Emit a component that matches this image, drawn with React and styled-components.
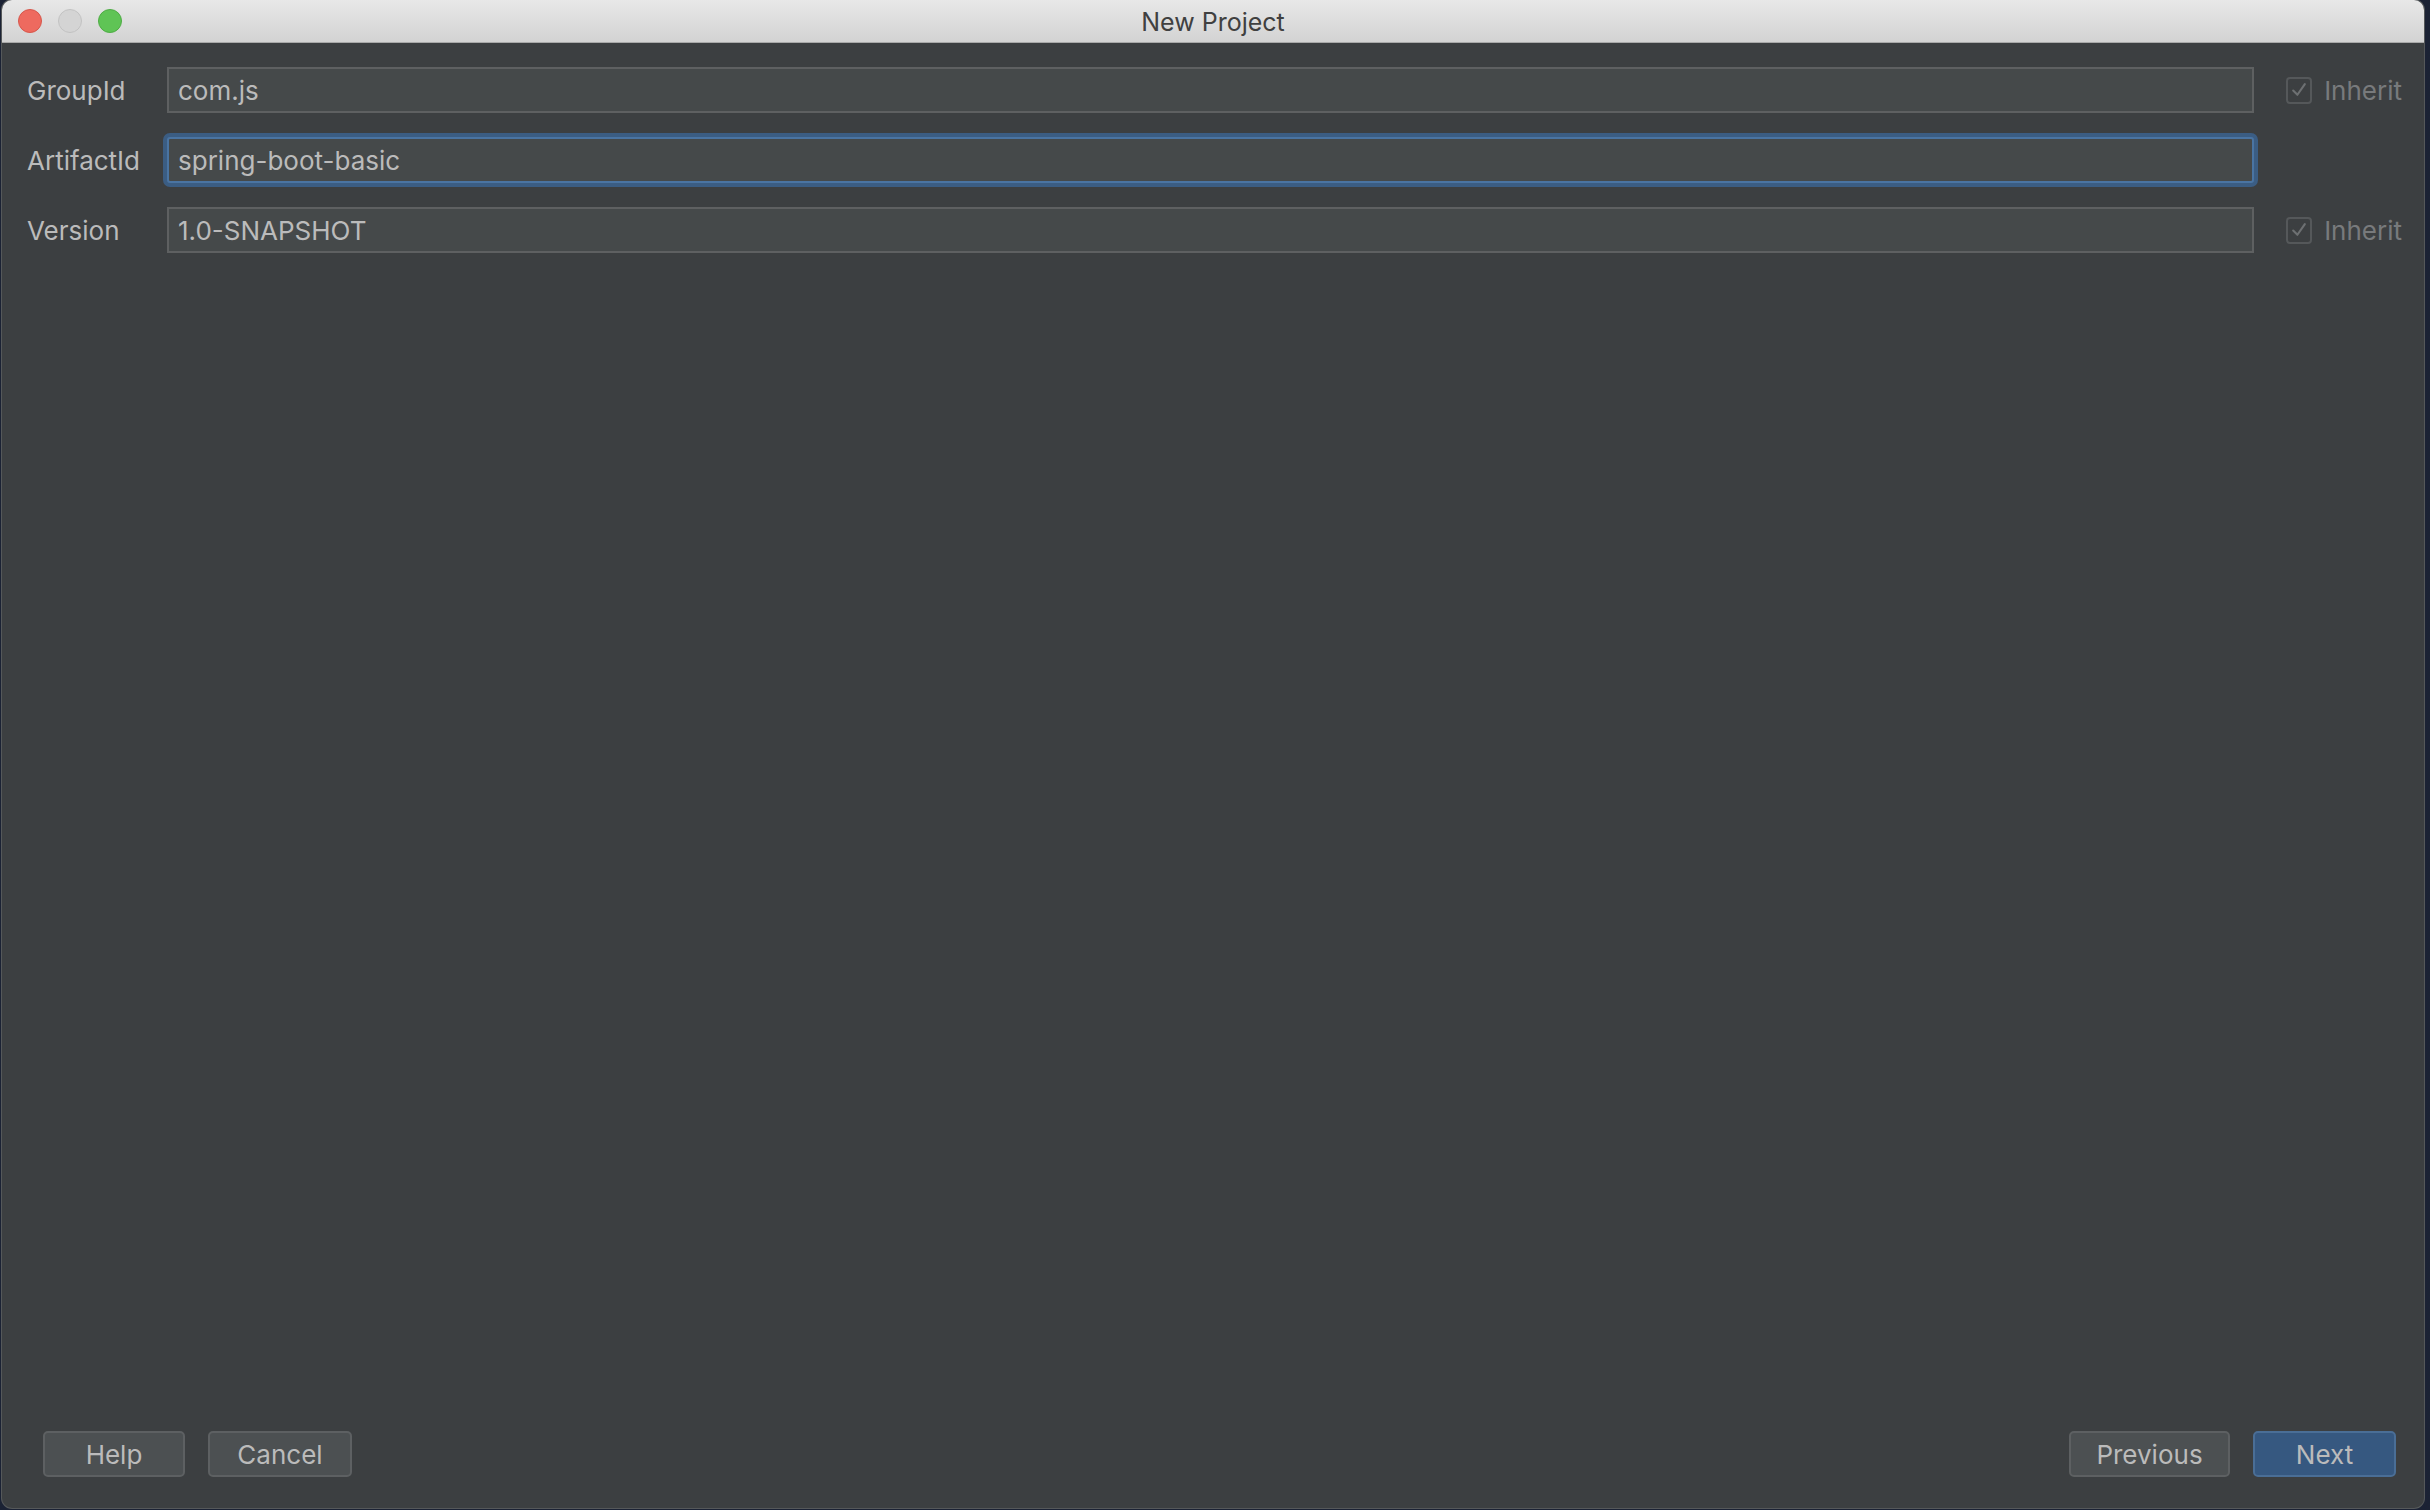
import React from "react"
import styled, { createGlobalStyle } from "styled-components"

const GlobalStyle = createGlobalStyle`
  html, body {
    margin: 0;
    padding: 0;
    background: #1b2234;
  }
  #root {
    width: 2430px;
    height: 1510px;
  }
`

const Desktop = styled.div`
  width: 2430px;
  height: 1510px;
  box-sizing: border-box;
  padding: 0 6px 2px 2px;
  display: flex;
  font-family: Inter, "Liberation Sans", sans-serif;
`

const Window = styled.div`
  flex: 1;
  display: flex;
  flex-direction: column;
  background: #3c3f41;
  border-radius: 10px;
  overflow: hidden;
  box-shadow: 0 0 0 1px #55585a;
`

const TitleBar = styled.div`
  position: relative;
  height: 42px;
  flex: none;
  display: flex;
  align-items: center;
  justify-content: center;
  background: linear-gradient(#e8e8e8, #d3d3d3);
  border-bottom: 1px solid #a9a9a9;
`

const Lights = styled.div`
  position: absolute;
  left: 16px;
  top: 9px;
  display: flex;
  gap: 16px;
`

const Light = styled.span`
  width: 24px;
  height: 24px;
  border-radius: 50%;
  box-sizing: border-box;
  background: ${p => p.color};
  border: 1px solid ${p => p.edge};
`

const Title = styled.div`
  font-size: 25px;
  color: #404040;
  padding-top: 2px;
`

const Form = styled.div`
  display: grid;
  grid-template-columns: 140px minmax(0, 1fr) 148px;
  grid-auto-rows: 46px;
  row-gap: 24px;
  padding: 24px 22px 0 25px;
`

const Label = styled.div`
  display: flex;
  align-items: center;
  font-size: 26px;
  color: #bbbbbb;
`

const Field = styled.div`
  display: flex;
  align-items: center;
  box-sizing: border-box;
  padding: 0 9px;
  background: #45494a;
  border: 2px solid ${p => (p.focused ? "#4a74a2" : "#5e6061")};
  border-radius: ${p => (p.focused ? "3px" : "0")};
  box-shadow: ${p => (p.focused ? "0 0 0 4px #3b5d83" : "none")};
  font-size: 26px;
  color: #bbbbbb;
`

const Inherit = styled.div`
  display: flex;
  align-items: center;
  gap: 12px;
  padding-left: 32px;
  font-size: 26px;
  color: #787a7c;
`

const Box = styled.span`
  width: 27px;
  height: 27px;
  box-sizing: border-box;
  border: 2px solid #55585a;
  border-radius: 4px;
  display: flex;
  align-items: center;
  justify-content: center;
`

const Spacer = styled.div`
  flex: 1;
`

const Footer = styled.div`
  display: flex;
  align-items: center;
  gap: 23px;
  padding: 0 28px 31px 41px;
`

const Button = styled.button`
  height: 46px;
  min-width: ${p => p.w}px;
  box-sizing: border-box;
  border-radius: 5px;
  border: 2px solid ${p => (p.primary ? "#4a6e96" : "#5d6062")};
  background: ${p => (p.primary ? "#365880" : "#4c5052")};
  color: #bbbbbb;
  font-family: inherit;
  font-size: 26px;
  padding: 0 20px;
`

const Grow = styled.div`
  flex: 1;
`

const Check = () => (
  <Box>
    <svg width="18" height="18" viewBox="0 0 17 17">
      <path d="M3 9 L7 13 L14 3" fill="none" stroke="#6d7072" strokeWidth="2" strokeLinecap="round" strokeLinejoin="round" />
    </svg>
  </Box>
)

const rows = [
  { label: "GroupId", value: "com.js", inherit: true },
  { label: "ArtifactId", value: "spring-boot-basic", focused: true },
  { label: "Version", value: "1.0-SNAPSHOT", inherit: true },
]

export default function App() {
  return (
    <>
      <GlobalStyle />
      <Desktop>
        <Window>
          <TitleBar>
            <Lights>
              <Light color="#ee6a5f" edge="#d6574c" />
              <Light color="#d4d4d4" edge="#c2c2c2" />
              <Light color="#5fc455" edge="#4fac45" />
            </Lights>
            <Title>New Project</Title>
          </TitleBar>
          <Form>
            {rows.map(r => (
              <React.Fragment key={r.label}>
                <Label>{r.label}</Label>
                <Field focused={r.focused}>{r.value}</Field>
                {r.inherit ? (
                  <Inherit>
                    <Check />
                    Inherit
                  </Inherit>
                ) : (
                  <div />
                )}
              </React.Fragment>
            ))}
          </Form>
          <Spacer />
          <Footer>
            <Button w={142}>Help</Button>
            <Button w={144}>Cancel</Button>
            <Grow />
            <Button w={161}>Previous</Button>
            <Button w={143} primary>Next</Button>
          </Footer>
        </Window>
      </Desktop>
    </>
  )
}
